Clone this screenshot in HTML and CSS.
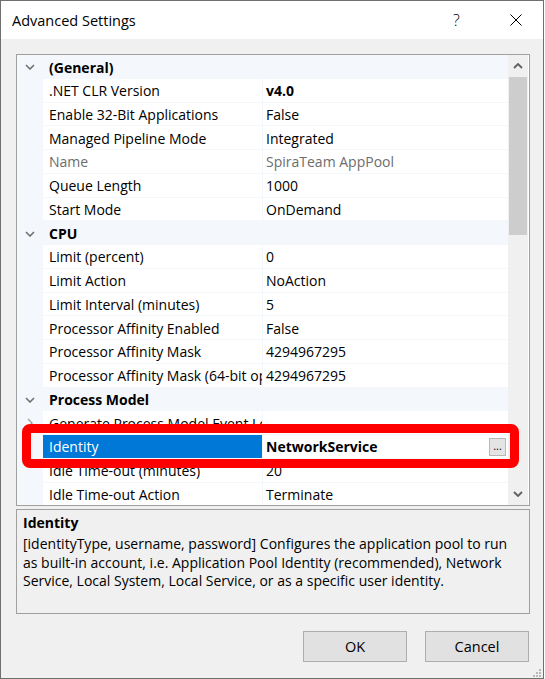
FILE: index.html
```html
<!DOCTYPE html>
<html>
<head>
<meta charset="utf-8">
<title>Advanced Settings</title>
<link rel="stylesheet" href="styles.css">
</head>
<body>
<div class="window">
  <div class="titlebar">
    <span class="title">Advanced Settings</span>
    <span class="help">?</span>
    <span class="close"><svg width="12" height="12" viewBox="0 0 12 12"><path d="M0.5 0.5 L11.5 11.5 M11.5 0.5 L0.5 11.5" stroke="#000" stroke-width="1" fill="none"/></svg></span>
  </div>
  <div class="content">
    <div class="grid">
      <div class="rows">
        <div class="cat"><span class="chev"><svg width="10" height="6" viewBox="0 0 10 6"><path d="M1 1 L5 5 L9 1" stroke="#707070" stroke-width="1.6" fill="none"/></svg></span><span class="cat-label">(General)</span></div>
        <div class="prop"><span class="margin"></span><span class="name">.NET CLR Version</span><span class="value bold">v4.0</span></div>
        <div class="prop"><span class="margin"></span><span class="name">Enable 32-Bit Applications</span><span class="value">False</span></div>
        <div class="prop"><span class="margin"></span><span class="name">Managed Pipeline Mode</span><span class="value">Integrated</span></div>
        <div class="prop readonly"><span class="margin"></span><span class="name">Name</span><span class="value">SpiraTeam AppPool</span></div>
        <div class="prop"><span class="margin"></span><span class="name">Queue Length</span><span class="value">1000</span></div>
        <div class="prop"><span class="margin"></span><span class="name">Start Mode</span><span class="value">OnDemand</span></div>
        <div class="cat"><span class="chev"><svg width="10" height="6" viewBox="0 0 10 6"><path d="M1 1 L5 5 L9 1" stroke="#707070" stroke-width="1.6" fill="none"/></svg></span><span class="cat-label">CPU</span></div>
        <div class="prop"><span class="margin"></span><span class="name">Limit (percent)</span><span class="value">0</span></div>
        <div class="prop"><span class="margin"></span><span class="name">Limit Action</span><span class="value">NoAction</span></div>
        <div class="prop"><span class="margin"></span><span class="name">Limit Interval (minutes)</span><span class="value">5</span></div>
        <div class="prop"><span class="margin"></span><span class="name">Processor Affinity Enabled</span><span class="value">False</span></div>
        <div class="prop"><span class="margin"></span><span class="name">Processor Affinity Mask</span><span class="value">4294967295</span></div>
        <div class="prop"><span class="margin"></span><span class="name"><span class="clip">Processor Affinity Mask (64-bit option)</span></span><span class="value">4294967295</span></div>
        <div class="cat"><span class="chev"><svg width="10" height="6" viewBox="0 0 10 6"><path d="M1 1 L5 5 L9 1" stroke="#707070" stroke-width="1.6" fill="none"/></svg></span><span class="cat-label">Process Model</span></div>
        <div class="prop"><span class="margin expander"><svg width="6" height="10" viewBox="0 0 6 10"><path d="M1 1 L5 5 L1 9" stroke="#a0a0a0" stroke-width="1.4" fill="none"/></svg></span><span class="name"><span class="clip">Generate Process Model Event Log Entry</span></span><span class="value"></span></div>
        <div class="prop selected"><span class="margin"></span><span class="name">Identity</span><span class="value bold"><span class="value-text">NetworkService</span><span class="ellipsis">...</span></span></div>
        <div class="prop"><span class="margin"></span><span class="name">Idle Time-out (minutes)</span><span class="value">20</span></div>
        <div class="prop"><span class="margin"></span><span class="name">Idle Time-out Action</span><span class="value">Terminate</span></div>
      </div>
      <div class="scrollbar">
        <div class="sb-btn"><svg width="10" height="6" viewBox="0 0 10 6"><path d="M1 5 L5 1 L9 5" stroke="#606060" stroke-width="1.8" fill="none"/></svg></div>
        <div class="sb-track"><div class="sb-thumb"></div></div>
        <div class="sb-btn"><svg width="10" height="6" viewBox="0 0 10 6"><path d="M1 1 L5 5 L9 1" stroke="#606060" stroke-width="1.8" fill="none"/></svg></div>
      </div>
    </div>
    <div class="desc">
      <div class="desc-title">Identity</div>
      <div class="desc-text">[identityType, username, password] Configures the application pool to run<br>as built-in account, i.e. Application Pool Identity (recommended), Network<br>Service, Local System, Local Service, or as a specific user identity.</div>
    </div>
    <div class="buttons">
      <button class="btn">OK</button>
      <button class="btn">Cancel</button>
    </div>
  </div>
  <div class="highlight"></div>
  <div class="grip"><svg width="8" height="8" viewBox="0 0 8 8"><g fill="#b8b8b8"><rect x="6" y="0" width="2" height="2"/><rect x="3" y="3" width="2" height="2"/><rect x="6" y="3" width="2" height="2"/><rect x="0" y="6" width="2" height="2"/><rect x="3" y="6" width="2" height="2"/><rect x="6" y="6" width="2" height="2"/></g></svg></div>
</div>
</body>
</html>
```
FILE: styles.css
```css
html, body {
  margin: 0;
  padding: 0;
  background: #ffffff;
}
body {
  font-family: "Open Sans", "Noto Sans", sans-serif;
  font-size: 14px;
  color: #000;
}
.window {
  position: relative;
  width: 544px;
  height: 679px;
  box-sizing: border-box;
  border: 1px solid #6f6f6f;
  background: #f0f0f0;
  overflow: hidden;
}
.titlebar {
  height: 38px;
  background: #ffffff;
  display: flex;
  align-items: center;
  padding-left: 11px;
}
.title {
  font-size: 14.5px;
  flex: 1;
}
.help {
  font-size: 16px;
  font-weight: 300;
  width: 12px;
  margin-right: 45px;
}
.close {
  display: flex;
  width: 12px;
  height: 12px;
  margin-right: 21px;
}
.content {
  padding: 15px 13px 0 15px;
}
.grid {
  height: 452px;
  box-sizing: border-box;
  border: 1px solid #a0a0a0;
  display: flex;
  background: #ffffff;
}
.rows {
  width: 491px;
  overflow: hidden;
  display: flex;
  flex-direction: column;
}
.cat, .prop {
  flex: none;
  height: 23.75px;
  box-sizing: border-box;
  background: #f4f7fc;
}
.cat {
  display: flex;
  align-items: center;
  font-weight: bold;
  padding-top: 1px;
}
.chev {
  display: flex;
  width: 32px;
  padding-left: 8px;
  box-sizing: border-box;
}
.prop {
  display: grid;
  grid-template-columns: 26px 219px 246px;
}
.margin {
  display: flex;
  align-items: center;
}
.expander {
  padding-left: 10px;
}
.name, .value {
  background: #ffffff;
  margin-bottom: 1px;
  white-space: nowrap;
  overflow: hidden;
  display: flex;
  align-items: center;
  padding-top: 1px;
}
.name {
  padding-left: 6px;
}
.clip {
  display: block;
  overflow: hidden;
  text-overflow: clip;
  white-space: nowrap;
  width: 100%;
}
.value {
  margin-left: 1px;
  padding-left: 3px;
}
.bold {
  font-weight: bold;
}
.readonly .name, .readonly .value {
  color: #6d6d6d;
}
.selected .name {
  background: #0078d7;
  color: #ffffff;
}
.value-text {
  flex: 1;
}
.ellipsis {
  width: 17px;
  height: 18px;
  margin-right: 2px;
  box-sizing: border-box;
  border: 1px solid #b8b8b8;
  background: #e4e4e4;
  font-size: 11px;
  font-weight: normal;
  line-height: 14px;
  text-align: center;
  color: #000;
}
.scrollbar {
  width: 20px;
  background: #f0f0f0;
  display: flex;
  flex-direction: column;
}
.sb-btn {
  height: 22px;
  display: flex;
  align-items: center;
  justify-content: center;
}
.sb-track {
  flex: 1;
}
.sb-thumb {
  height: 158px;
  margin: 0 1px;
  background: #cdcdcd;
}
.desc {
  margin-top: 3px;
  height: 105px;
  box-sizing: border-box;
  border: 1px solid #a0a0a0;
  padding: 3px 6px 0 6px;
}
.desc-title {
  font-weight: bold;
  line-height: 19px;
  margin-bottom: 3px;
}
.desc-text {
  line-height: 18.5px;
}
.buttons {
  margin-top: 17px;
  display: flex;
  justify-content: flex-end;
  gap: 18px;
  padding-right: 1px;
}
.btn {
  width: 104px;
  height: 31px;
  box-sizing: border-box;
  border: 1px solid #adadad;
  background: #e1e1e1;
  font-family: "Open Sans", "Noto Sans", sans-serif;
  font-size: 14.5px;
  color: #000;
  padding: 0;
}
.highlight {
  position: absolute;
  left: 21px;
  top: 423px;
  width: 497px;
  height: 44px;
  box-sizing: border-box;
  border: 9px solid #ff0000;
  border-radius: 8px;
}
.grip {
  position: absolute;
  right: 2px;
  bottom: 1px;
  display: flex;
}
```
